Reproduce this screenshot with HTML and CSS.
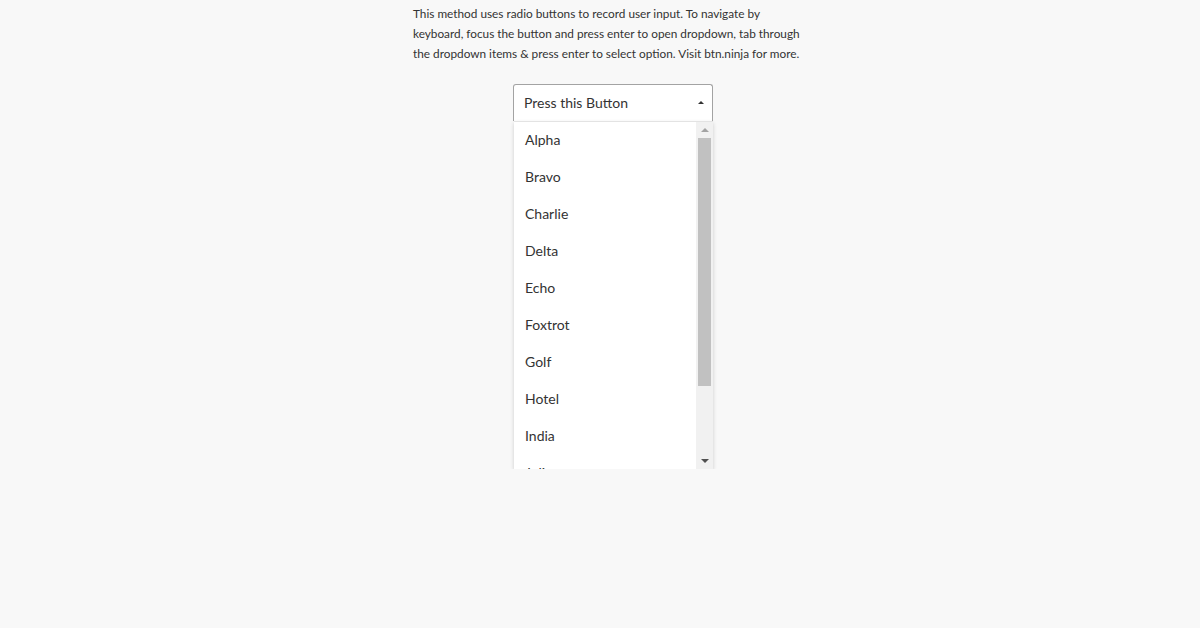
FILE: index.html
```html
<!DOCTYPE html>
<html lang="en">
<head>
  <meta charset="UTF-8" />
  <title>Dropdown select</title>
  <link rel="stylesheet" href="styles.css">
</head>
<body>
  <div class="wrap">
    <p class="info">This method uses radio buttons to record user input. To navigate by keyboard, focus the button and press enter to open dropdown, tab through the dropdown items &amp; press enter to select option. Visit btn.ninja for more.</p>

    <div class="select">
      <div class="select-btn">Press this Button <span class="caret"></span></div>
      <div class="menu">
        <ul class="options">
          <li>Alpha</li>
          <li>Bravo</li>
          <li>Charlie</li>
          <li>Delta</li>
          <li>Echo</li>
          <li>Foxtrot</li>
          <li>Golf</li>
          <li>Hotel</li>
          <li>India</li>
          <li>Juliett</li>
          <li>Kilo</li>
          <li>Lima</li>
        </ul>
        <div class="scrollbar">
          <div class="sb-btn"><span class="sb-up"></span></div>
          <div class="sb-track"><div class="sb-thumb"></div></div>
          <div class="sb-btn"><span class="sb-down"></span></div>
        </div>
      </div>
    </div>
  </div>
</body>
</html>
```

FILE: styles.css
```css
body {
  margin: 0;
  padding: 0 0 0 26px;
  background: #f8f8f8;
  font-family: Lato, 'Open Sans', sans-serif;
  color: #333;
}
.wrap {
  width: 400px;
  margin: 0 auto;
}
.info {
  margin: 4px 0 0;
  font-size: 11.8px;
  line-height: 20px;
  color: #333;
}
.select {
  width: 200px;
  margin: 20px auto 0;
  display: flex;
  flex-direction: column;
}
.select-btn {
  display: flex;
  align-items: center;
  justify-content: space-between;
  height: 37px;
  padding: 0 10px 2px;
  box-sizing: border-box;
  background: #fff;
  border: 1px solid #a3a3a3;
  border-bottom: none;
  border-radius: 3px 3px 0 0;
  font-size: 14px;
  color: #333;
}
.caret {
  width: 0;
  height: 0;
  margin-right: -2px;
  border-left: 3.5px solid transparent;
  border-right: 3.5px solid transparent;
  border-bottom: 3.5px solid #333;
}
.menu {
  margin-left: 1px;
  height: 348px;
  display: flex;
  background: #fff;
  border-top: 1px solid #e3e3e3;
  box-sizing: border-box;
  box-shadow: 0 2px 4px rgba(0,0,0,0.18);
}
.options {
  flex: 1;
  margin: -1px 0 0;
  padding: 0;
  list-style: none;
  overflow: hidden;
}
.options li {
  height: 37px;
  line-height: 37px;
  padding-left: 11px;
  font-size: 14px;
  color: #333;
}
.scrollbar {
  width: 17px;
  display: flex;
  flex-direction: column;
  background: #f1f1f1;
}
.sb-btn {
  height: 16px;
  display: flex;
  align-items: center;
  justify-content: center;
}
.sb-up {
  border-left: 4px solid transparent;
  border-right: 4px solid transparent;
  border-bottom: 4px solid #a3a3a3;
}
.sb-down {
  border-left: 4px solid transparent;
  border-right: 4px solid transparent;
  border-top: 4px solid #505050;
}
.sb-track {
  flex: 1;
  padding: 0 2px;
}
.sb-thumb {
  height: 248px;
  background: #c1c1c1;
}
```
